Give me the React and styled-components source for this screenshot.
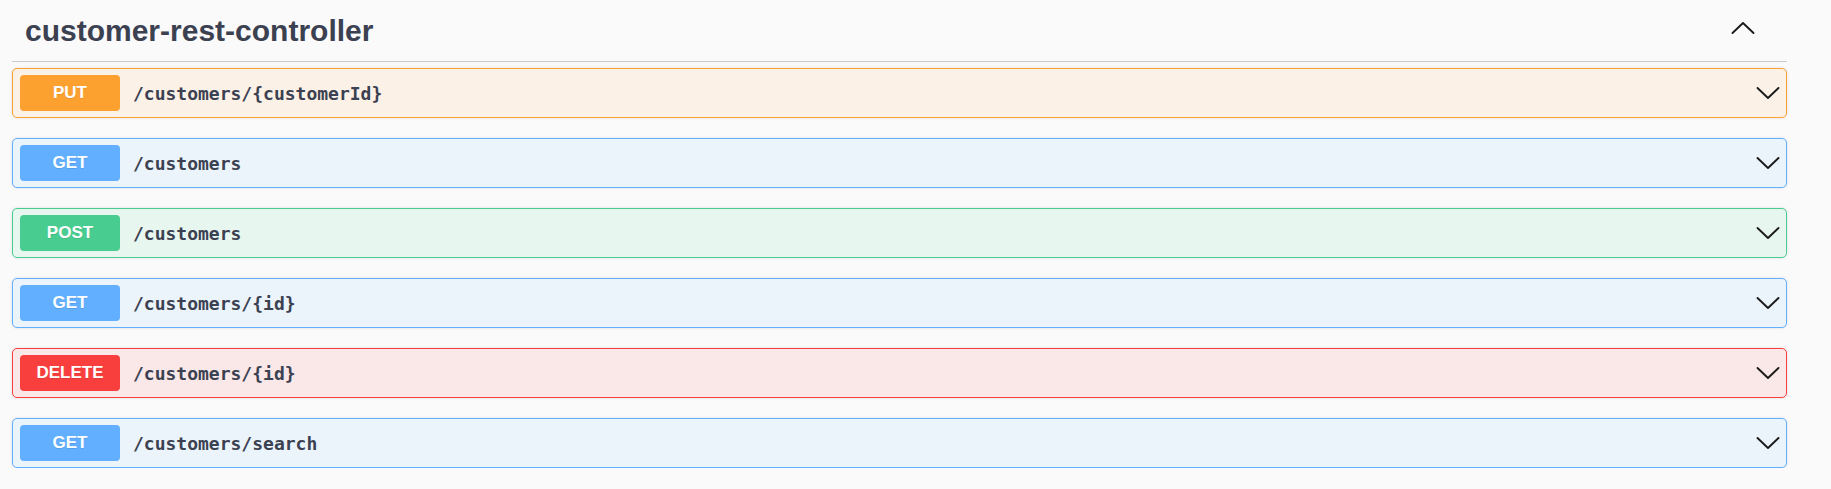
import React from "react";
import styled, { createGlobalStyle } from "styled-components";

const Global = createGlobalStyle`
  html, body { margin: 0; padding: 0; background: #fafafa; }
  body { font-family: "Liberation Sans", Arial, sans-serif; }
`;

const METHODS = {
  PUT: { color: "#fca130", bg: "#fcf1e6" },
  GET: { color: "#61affe", bg: "#ebf3fb" },
  POST: { color: "#49cc90", bg: "#e8f6f0" },
  DELETE: { color: "#f93e3e", bg: "#fae7e7" },
};

const Page = styled.div`
  width: 1775px;
  padding: 0 0 0 12px;
  box-sizing: content-box;
`;

const TagHeader = styled.div`
  display: flex;
  align-items: center;
  justify-content: space-between;
  height: 61px;
  padding: 0 31px 0 13px;
  border-bottom: 1px solid #c8c9cd;
  margin-bottom: 6px;
`;

const TagTitle = styled.h3`
  margin: 0;
  font-family: "Liberation Sans", Arial, sans-serif;
  font-size: 30px;
  font-weight: 700;
  color: #3b4151;
  line-height: 1;
`;

const IconButton = styled.button`
  border: none;
  background: none;
  padding: 0;
  display: flex;
  align-items: center;
  justify-content: center;
  width: 26px;
  height: 26px;
  cursor: pointer;
  margin-bottom: ${(p) => (p.$raised ? "6px" : "0")};
`;

const Blocks = styled.div`
  display: flex;
  flex-direction: column;
  gap: 20px;
`;

const Block = styled.div`
  box-sizing: border-box;
  height: 50px;
  border: 1px solid ${(p) => p.$color};
  background: ${(p) => p.$bg};
  border-radius: 5px;
  box-shadow: 0 0 3px rgba(0, 0, 0, 0.12);
  display: flex;
  align-items: center;
  padding: 0 5px 0 7px;
`;

const Method = styled.span`
  box-sizing: border-box;
  width: 100px;
  height: 36px;
  border-radius: 4px;
  background: ${(p) => p.$color};
  color: #fff;
  font-family: "Liberation Sans", Arial, sans-serif;
  font-weight: 700;
  font-size: 17px;
  display: flex;
  align-items: center;
  justify-content: center;
  text-shadow: 0 1px 0 rgba(0, 0, 0, 0.1);
  flex-shrink: 0;
`;

const Path = styled.span`
  flex: 1;
  margin-left: 13px;
  font-family: "DejaVu Sans Mono", "Liberation Mono", monospace;
  font-weight: 600;
  font-size: 18px;
  color: #3b4151;
`;

const Chevron = ({ up }) => (
  <svg width="24" height="14" viewBox="0 0 24 14" fill="none">
    <polyline
      points={up ? "1.5,12 12,2 22.5,12" : "1.5,2 12,12 22.5,2"}
      stroke="#1b1b1b"
      strokeWidth="1.9"
      strokeLinecap="round"
      strokeLinejoin="round"
    />
  </svg>
);

const ops = [
  { m: "PUT", p: "/customers/{customerId}" },
  { m: "GET", p: "/customers" },
  { m: "POST", p: "/customers" },
  { m: "GET", p: "/customers/{id}" },
  { m: "DELETE", p: "/customers/{id}" },
  { m: "GET", p: "/customers/search" },
];

export default function App() {
  return (
    <>
      <Global />
      <Page>
        <TagHeader>
          <TagTitle>customer-rest-controller</TagTitle>
          <IconButton aria-label="collapse" $raised>
            <Chevron up />
          </IconButton>
        </TagHeader>
        <Blocks>
          {ops.map((o, i) => (
            <Block key={i} $color={METHODS[o.m].color} $bg={METHODS[o.m].bg}>
              <Method $color={METHODS[o.m].color}>{o.m}</Method>
              <Path>{o.p}</Path>
              <IconButton aria-label="expand">
                <Chevron />
              </IconButton>
            </Block>
          ))}
        </Blocks>
      </Page>
    </>
  );
}
